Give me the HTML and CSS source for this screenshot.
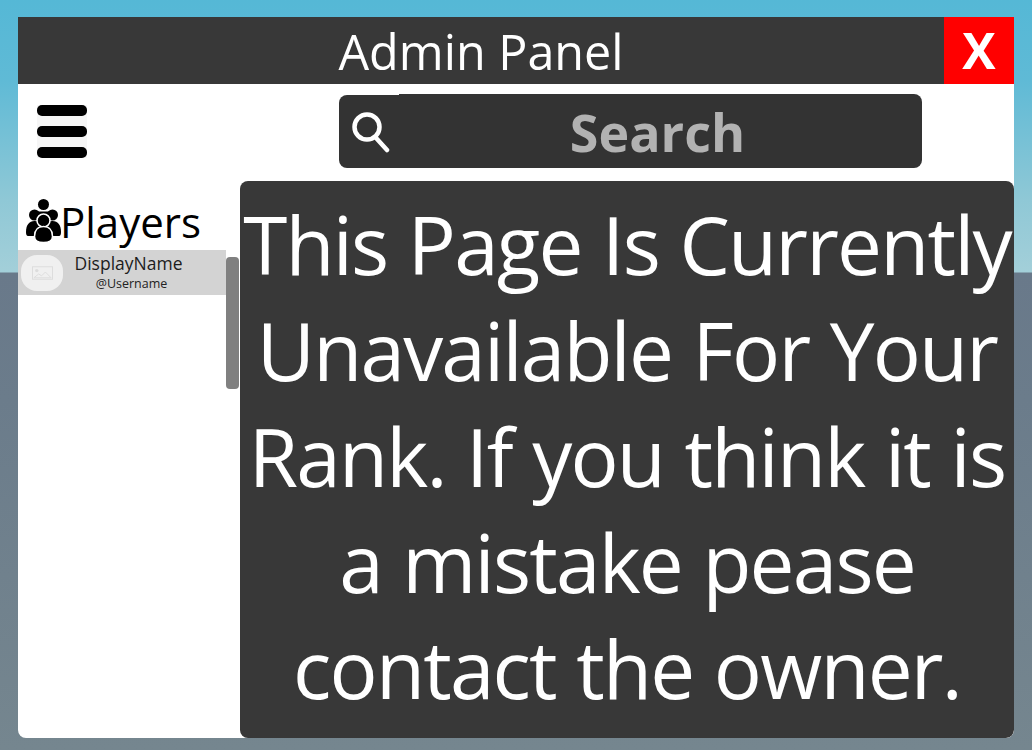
FILE: index.html
```html
<!DOCTYPE html>
<html lang="en">
<head>
    <meta charset="UTF-8">
    <meta name="viewport" content="width=device-width, initial-scale=1.0">
    <title>Admin Panel</title>
    <link rel="stylesheet" href="styles.css">
</head>
<body>
    <div class="panel">
        <header class="title-bar">
            <h1>Admin Panel</h1>
            <button class="close-btn" type="button">X</button>
        </header>
        <div class="panel-body">
            <aside class="sidebar">
                <button class="menu-btn" type="button" aria-label="Menu">
                    <span></span><span></span><span></span>
                </button>
                <h2 class="section-title">
                    <svg class="players-icon" viewBox="0 0 36 44" aria-hidden="true">
                        <circle cx="17.500" cy="5.500" r="5.500"/>
                        <path d="M11 12.500h13l3 6H8z"/>
                        <circle cx="8.500" cy="16" r="5.500"/>
                        <circle cx="26.500" cy="16" r="5.500"/>
                        <path d="M0 33c0-7 3-11 8.500-11 4 0 6 2 7 4L10 37H2c-1.300 0-2-1.500-2-4z"/>
                        <path d="M35 33c0-7-3-11-8.500-11-4 0-6 2-7 4l5.500 11h8c1.300 0 2-1.500 2-4z"/>
                        <circle cx="17.500" cy="21.500" r="6.500" stroke="#fff" stroke-width="1.500"/>
                        <path d="M8.500 37.500c0-6.500 3.500-10 9-10s9 3.500 9 10c0 4-4 6-9 6s-9-2-9-6z" stroke="#fff" stroke-width="1.500"/>
                    </svg>
                    Players
                </h2>
                <div class="player-list">
                    <div class="players">
                        <div class="player-row">
                            <div class="avatar">
                                <svg viewBox="0 0 22 14" aria-hidden="true">
                                    <rect x="0.500" y="0.500" width="21" height="13" fill="none" stroke="#dcdcdc"/>
                                    <circle cx="5" cy="4.500" r="1.800" fill="#dcdcdc"/>
                                    <path d="M2 12l5-4 3 2 4-4 6 6z" fill="none" stroke="#dcdcdc"/>
                                </svg>
                            </div>
                            <div class="player-names">
                                <div class="display-name">DisplayName</div>
                                <div class="username">@Username</div>
                            </div>
                        </div>
                    </div>
                    <div class="scrollbar"></div>
                </div>
            </aside>
            <main class="content">
                <div class="search-row">
                    <div class="search-icon-box">
                        <svg class="search-icon" viewBox="0 0 40 44" aria-hidden="true">
                            <circle cx="15" cy="18" r="12.500" fill="none" stroke="#fff" stroke-width="4.500"/>
                            <path d="M25 30l10 11" fill="none" stroke="#fff" stroke-width="4.500" stroke-linecap="round"/>
                        </svg>
                    </div>
                    <div class="search-box">Search</div>
                </div>
                <div class="message">This Page Is Currently Unavailable For Your Rank. If you think it is a mistake pease contact the owner.</div>
            </main>
        </div>
    </div>
</body>
</html>
```
FILE: styles.css
```css
:root {
    --dark-color: #383838;
    --search-color: #333333;
}
* {
    box-sizing: border-box;
}
body {
    margin: 0;
    height: 750px;
    overflow: hidden;
    padding: 17px 18px 12px;
    font-family: "Open Sans", "Noto Sans", sans-serif;
    background: linear-gradient(to bottom, #55b8d6 0, #5fbad6 80px, #8fc8d6 200px, #a3cfd9 272px, #69798a 273px, #6b7c8b 400px, #75868f 750px);
}
.panel {
    height: 721px;
    display: flex;
    flex-direction: column;
    background-color: #fff;
    border-radius: 0 0 8px 8px;
    overflow: hidden;
}
.title-bar {
    height: 67px;
    flex-shrink: 0;
    display: flex;
    background-color: var(--dark-color);
    color: #fff;
}
.title-bar h1 {
    flex: 1;
    margin: 0;
    text-align: center;
    font-size: 48.500px;
    font-weight: 400;
    line-height: 68px;
}
.close-btn {
    width: 70px;
    border: none;
    padding: 0;
    background-color: #ff0000;
    color: #fff;
    font-family: "Open Sans", sans-serif;
    font-size: 50px;
    font-weight: 700;
    line-height: 67px;
}
.panel-body {
    flex: 1;
    display: flex;
    min-height: 0;
}
.sidebar {
    width: 222px;
    flex-shrink: 0;
    display: flex;
    flex-direction: column;
}
.menu-btn {
    width: 50px;
    height: 53px;
    margin: 21px 0 0 19px;
    padding: 0;
    border: none;
    background-color: #f6f6f6;
    display: flex;
    flex-direction: column;
    justify-content: space-between;
}
.menu-btn span {
    display: block;
    height: 11px;
    border-radius: 5px;
    background-color: #000;
}
.section-title {
    display: flex;
    align-items: center;
    gap: 0;
    height: 48px;
    margin: 39px 0 0 8px;
    font-size: 42px;
    font-weight: 400;
    color: #000;
}
.players-icon {
    width: 36px;
    height: 44px;
    margin-right: -2px;
    flex-shrink: 0;
}
.player-list {
    flex: 1;
    display: flex;
    margin-top: 5px;
    padding-right: 1px;
}
.players {
    flex: 1;
}
.player-row {
    height: 45px;
    display: flex;
    align-items: center;
    padding-left: 3px;
    background-color: #d3d3d3;
}
.avatar {
    width: 42px;
    height: 36px;
    flex-shrink: 0;
    display: flex;
    align-items: center;
    justify-content: center;
    border-radius: 16px;
    background-color: #f0f0f0;
}
.avatar svg {
    width: 21px;
    height: 14px;
}
.player-names {
    flex: 1;
    text-align: center;
    padding: 2px 32px 0 0;
}
.display-name {
    font-size: 17.500px;
    line-height: 20px;
    color: #1c1c1c;
}
.username {
    margin-top: 1px;
    padding-left: 6px;
    font-size: 12.500px;
    line-height: 20px;
    color: #222;
}
.scrollbar {
    width: 13px;
    height: 132px;
    margin-top: 7px;
    border-radius: 4px;
    background-color: #808080;
}
.content {
    flex: 1;
    min-width: 0;
    display: flex;
    flex-direction: column;
}
.search-row {
    height: 97px;
    display: flex;
    padding: 10px 92px 0 99px;
}
.search-icon-box {
    width: 60px;
    height: 73px;
    margin-top: 1px;
    padding: 14px 0 0 13px;
    border-radius: 8px 0 0 8px;
    background-color: var(--search-color);
}
.search-icon {
    display: block;
    width: 40px;
    height: 44px;
}
.search-box {
    flex: 1;
    height: 74px;
    padding-right: 6px;
    border-radius: 0 8px 8px 0;
    background-color: var(--search-color);
    text-align: center;
    font-size: 52px;
    font-weight: 700;
    line-height: 76px;
    color: #b2b2b2;
}
.message {
    flex: 1;
    border-radius: 8px;
    background-color: var(--dark-color);
    color: #fff;
    text-align: center;
    font-size: 80px;
    letter-spacing: -1.800px;
    word-spacing: 1.500px;
    line-height: 106px;
    padding-top: 10px;
    overflow: hidden;
}
```
